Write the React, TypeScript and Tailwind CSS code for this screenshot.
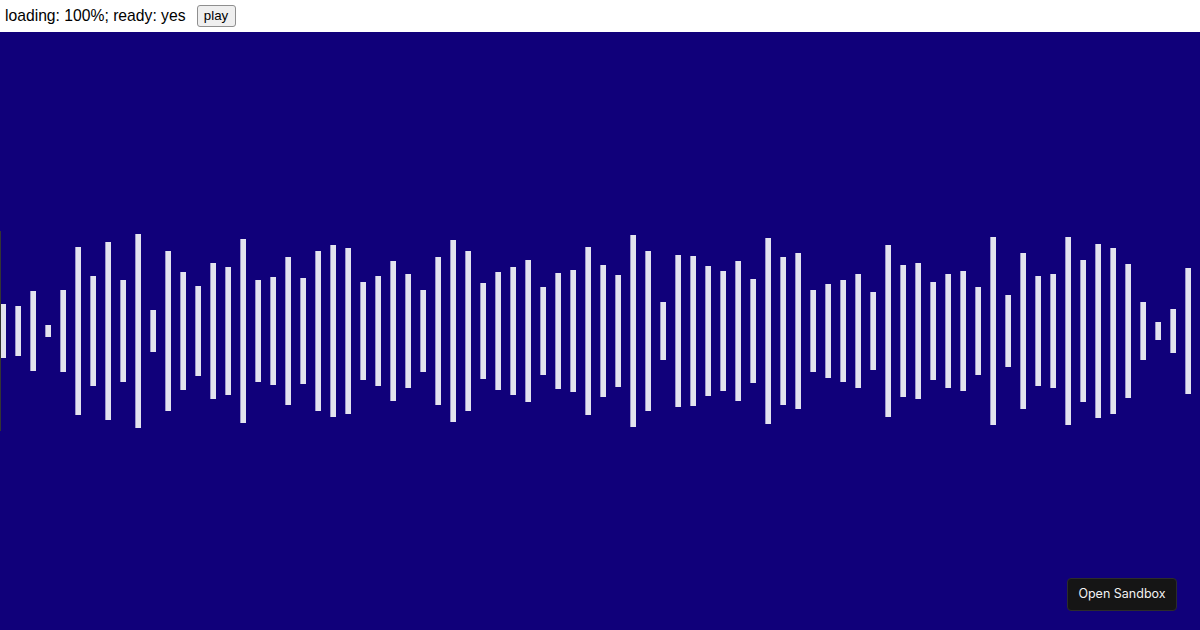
import React from 'react';

// bar heights in px, one bar every 15px, centred on the wave's middle line
const peaks = [
  54, 50, 80, 12, 82, 168, 110, 178, 102, 194, 42, 160, 118, 90, 136, 128, 184, 102, 108, 148,
  106, 160, 172, 166, 98, 110, 140, 114, 82, 148, 182, 160, 96, 118, 128, 142, 88, 116, 122, 168,
  132, 112, 192, 160, 58, 152, 150, 130, 120, 140, 104, 186, 148, 156, 82, 94, 102, 114, 78, 172,
  132, 136, 98, 114, 120, 88, 188, 72, 156, 110, 114, 188, 142, 174, 166, 134, 58, 18, 44, 126,
];

export default function App() {
  return (
    <div className="w-[1200px] h-[630px] overflow-hidden bg-white font-['Liberation_Sans',Arial,sans-serif]">
      <div className="h-[32px] flex items-center pl-[5px] text-[15.7px] text-black">
        <span>loading: 100%; ready: yes</span>
        <button className="ml-[11px] h-[22px] w-[39px] text-[13.3px] leading-none bg-[#efefef] border border-[#8f8f8f] rounded-[3px] text-black">
          play
        </button>
      </div>

      <div className="relative h-[598px] bg-[#10007a] flex items-center">
        <div className="absolute left-0 top-[199px] w-px h-[200px] bg-[#333333]" />
        <div className="flex items-center gap-[9px]">
          {peaks.map((h, i) => (
            <div
              key={i}
              className="w-[6px] shrink-0 bg-[#e3e3ee] border-l border-l-[#9b96ca]"
              style={{ height: h }}
            />
          ))}
        </div>

        <button className="absolute right-[23px] bottom-[19px] w-[110px] h-[33px] bg-[#151515] border border-[#2c2c2c] rounded-[4px] text-[12.5px] text-[#f2f2f2] font-['Inter',sans-serif]">
          Open Sandbox
        </button>
      </div>
    </div>
  );
}
